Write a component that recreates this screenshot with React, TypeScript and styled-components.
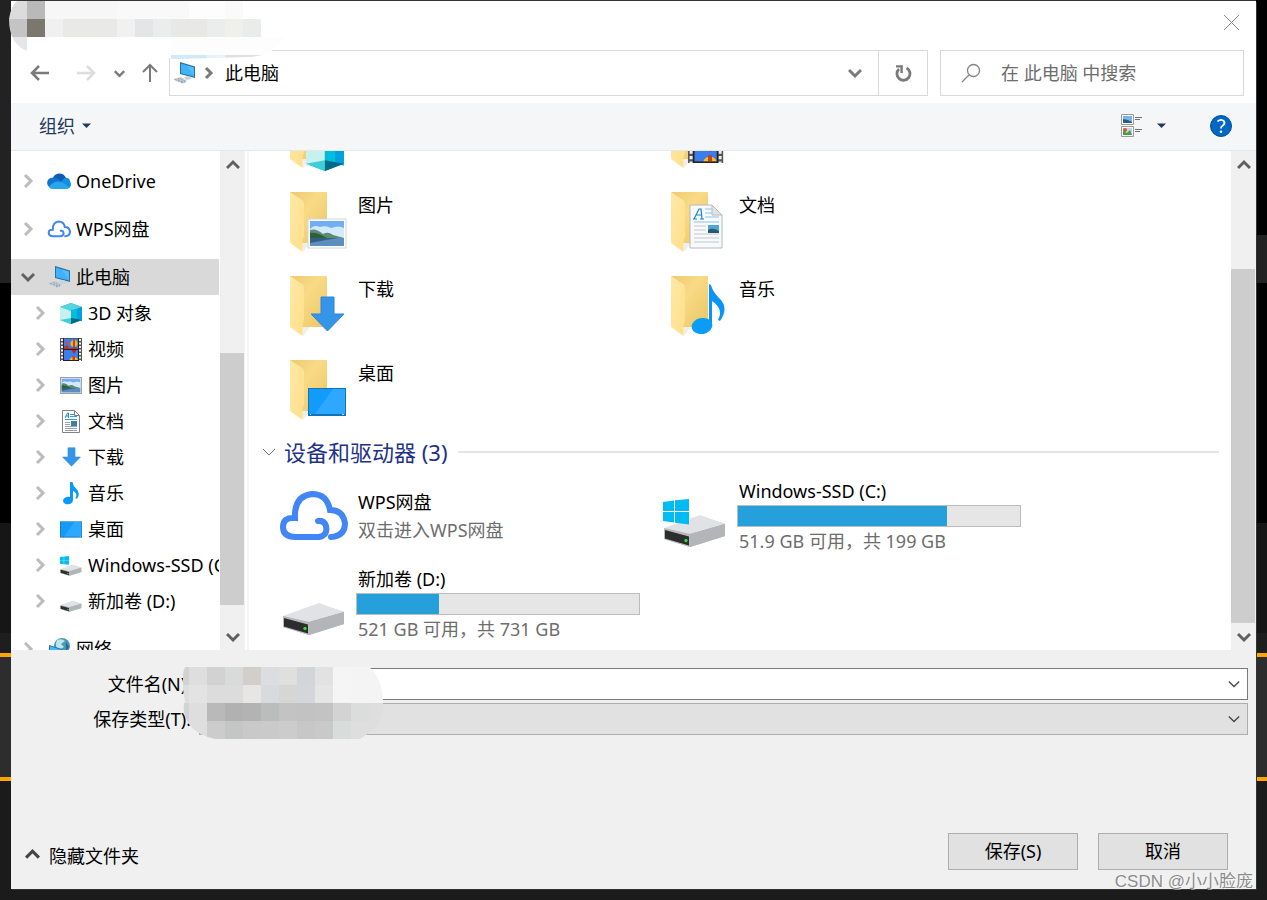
import React from 'react';
import styled, { createGlobalStyle, css } from 'styled-components';

const GlobalStyle = createGlobalStyle`
  *, *::before, *::after { box-sizing: border-box; }
  body {
    margin: 0;
    color: #000;
    font: 18px/24px "Noto Sans", "Noto Sans CJK SC", sans-serif;
    background: #000;
  }
  button, input, select { font: inherit; color: inherit; margin: 0; }
  svg { display: block; flex: none; }
`;

/* ---------- Backdrop and window ---------- */

const Desktop = styled.div`
  position: relative;
  min-height: 100vh;
  padding: 1px 11px 11px;
  background:
    linear-gradient(#1b1b1b, #1b1b1b) 0 889px / 100% 11px no-repeat,
    linear-gradient(#222 283px, #000 283px, #000 523px, #161616 523px, #161616 633px, #1e1e1e 633px, #1e1e1e 653px, #ffa500 653px, #ffa500 657px, #2d2d2d 657px, #2d2d2d 777px, #ffa500 777px, #ffa500 781px, #1b1b1b 781px) 0 0 / 50% 100% no-repeat,
    linear-gradient(#000 235px, #222 235px, #222 283px, #000 283px, #000 523px, #161616 523px, #161616 633px, #1e1e1e 633px, #1e1e1e 653px, #ffa500 653px, #ffa500 657px, #2d2d2d 657px, #2d2d2d 777px, #ffa500 777px, #ffa500 781px, #1b1b1b 781px) 100% 0 / 50% 100% no-repeat;
`;

const Dialog = styled.form`
  display: flex;
  flex-direction: column;
  height: calc(100vh - 12px);
  min-height: 620px;
  background: #fff;
  box-shadow: 1px 1px 0 #333, 0 -1px 0 #333;
`;

const TitleBar = styled.header`
  display: flex;
  justify-content: flex-end;
  align-items: center;
  height: 43px;
  padding-right: 16px;
`;

const PlainButton = styled.button`
  display: flex;
  align-items: center;
  padding: 0;
  border: 0;
  background: none;
`;

/* ---------- Address row ---------- */

const NavRow = styled.nav`
  display: flex;
  align-items: stretch;
  height: 46px;
  margin: 6px 12px 7px 19px;
`;

const NavButton = styled(PlainButton)<{ $gap: number }>`
  margin-right: ${(p) => p.$gap}px;
`;

const AddressBar = styled.div`
  display: flex;
  align-items: stretch;
  flex: 1;
  min-width: 0;
  margin-right: 12px;
  border: 1px solid #d9d9d9;
`;

const Crumbs = styled.div`
  display: flex;
  align-items: center;
  flex: 1;
  gap: 2px;
  padding-left: 2px;
`;

const Crumb = styled.span`
  margin-left: 9px;
`;

const AddressButton = styled(PlainButton)<{ $divided?: boolean }>`
  justify-content: center;
  width: ${(p) => (p.$divided ? 49 : 47)}px;
  ${(p) => p.$divided && css`border-left: 1px solid #d9d9d9;`}
`;

const SearchBox = styled.label`
  display: flex;
  align-items: center;
  gap: 20px;
  flex: 0 1 304px;
  min-width: 0;
  padding-left: 20px;
  border: 1px solid #d9d9d9;
`;

const SearchInput = styled.input`
  flex: 1;
  min-width: 0;
  padding: 0;
  border: 0;
  outline: 0;
  background: none;
  &::placeholder { color: #6d6d6d; opacity: 1; }
`;

/* ---------- Command bar ---------- */

const CommandBar = styled.div`
  display: flex;
  align-items: center;
  flex: none;
  height: 48px;
  padding: 0 24px 2px 28px;
  color: #1e395b;
  background: #f5f6f7;
  border-bottom: 1px solid #e5e7e9;
`;

const CommandButton = styled(PlainButton)<{ $gap?: number; $push?: boolean }>`
  gap: ${(p) => p.$gap ?? 0}px;
  color: #1e395b;
  ${(p) => p.$push && css`margin: 0 43px 0 auto;`}
`;

/* ---------- Panes ---------- */

const Panes = styled.div`
  display: flex;
  flex: 1;
  min-height: 0;
`;

const Tree = styled.ul`
  flex: 0 0 209px;
  margin: 0;
  padding: 12px 1px 0 0;
  overflow: hidden;
  list-style: none;
`;

const TreeRow = styled.li<{ $level: number; $selected?: boolean; $spaced?: boolean }>`
  display: flex;
  align-items: center;
  height: 36px;
  margin-bottom: ${(p) => (p.$spaced ? 12 : 0)}px;
  padding-left: ${(p) => 10 + p.$level * 12}px;
  white-space: nowrap;
  background: ${(p) => (p.$selected ? '#d9d9d9' : 'transparent')};
`;

const TreeIcon = styled.span`
  display: flex;
  justify-content: center;
  flex: none;
  width: 24px;
  margin: 0 5px 0 12px;
`;

const TreeName = styled.span`
  min-width: 0;
  overflow: hidden;
`;

const ScrollTrack = styled.div`
  display: flex;
  flex-direction: column;
  flex: none;
  width: 25px;
  background: #f0f0f0;
`;

const ScrollButton = styled(PlainButton)<{ $height: number }>`
  justify-content: center;
  flex: none;
  width: 25px;
  height: ${(p) => p.$height}px;
`;

const ScrollSpace = styled.div<{ $grow: number; $thumb?: boolean }>`
  flex: ${(p) => p.$grow} 1 0;
  width: 24px;
  background: ${(p) => (p.$thumb ? '#cdcdcd' : 'transparent')};
`;

const Divider = styled.div`
  flex: none;
  width: 4px;
  border-right: 2px solid #f5f5f5;
`;

const Files = styled.main`
  display: flex;
  flex-direction: column;
  justify-content: flex-end;
  flex: 1;
  min-width: 0;
  padding: 0 12px 2px 13px;
  overflow: hidden;
`;

const TileGrid = styled.div<{ $row: number }>`
  display: grid;
  flex: none;
  grid-template-columns: repeat(2, 381px);
  grid-auto-rows: ${(p) => p.$row}px;
  margin-left: 16px;
`;

const FolderTile = styled.div`
  display: flex;
  align-items: flex-start;
`;

const FolderName = styled.span`
  margin: 5px 0 0 10px;
`;

const GroupHeader = styled.h2`
  display: flex;
  align-items: center;
  flex: none;
  gap: 8px;
  height: 24px;
  margin: 0 0 8px;
  font-size: 22px;
  font-weight: 400;
  line-height: 24px;
  color: #1e3287;
  &::after { content: ""; flex: 1; height: 2px; margin-left: 2px; background: #e5e5e5; }
`;

const DriveTile = styled.div`
  display: flex;
  align-items: center;
  gap: 8px;
`;

const DriveInfo = styled.div`
  width: 284px;
`;

const DriveLine = styled.div<{ $muted?: boolean }>`
  padding-left: 2px;
  line-height: 28px;
  color: ${(p) => (p.$muted ? '#6d6d6d' : '#000')};
`;

const Capacity = styled.div`
  height: 22px;
  border: 1px solid #bcbcbc;
  background: #e6e6e6;
`;

const Used = styled.div`
  height: 100%;
  background: #26a0da;
`;

/* ---------- Bottom form ---------- */

const Footer = styled.footer`
  display: flex;
  flex-direction: column;
  flex: none;
  height: 239px;
  padding: 18px 8px 19px 0;
  background: #f0f0f0;
`;

const FieldRow = styled.div`
  display: grid;
  grid-template-columns: 180px 1fr;
  column-gap: 8px;
  align-items: center;
  margin-bottom: 3px;
`;

const FieldLabel = styled.label`
  text-align: right;
  white-space: nowrap;
`;

const Combo = styled.div<{ $filled?: boolean }>`
  display: flex;
  align-items: center;
  height: 32px;
  padding-right: 7px;
  border: 1px solid ${(p) => (p.$filled ? '#adadad' : '#7a7a7a')};
  background: ${(p) => (p.$filled ? '#e1e1e1' : '#fff')};
`;

const comboField = css`
  flex: 1;
  min-width: 0;
  height: 28px;
  border: 0;
  outline: 0;
  background: transparent;
`;

const NameInput = styled.input`${comboField}`;
const TypeSelect = styled.select`
  ${comboField}
  appearance: none;
`;

const Actions = styled.div`
  display: flex;
  align-items: center;
  gap: 20px;
  margin-top: auto;
  padding: 0 20px 0 14px;
`;

const HideFolders = styled(PlainButton)`
  gap: 9px;
  margin: 8px auto 0 0;
`;

const ActionButton = styled.button`
  width: 130px;
  height: 37px;
  padding: 0 0 2px;
  border: 1px solid #adadad;
  background: #e1e1e1;
`;

/* ---------- Overlays ---------- */

const Redaction = styled.svg<{ $x: number; $y: number }>`
  position: absolute;
  left: ${(p) => p.$x}px;
  top: ${(p) => p.$y}px;
  pointer-events: none;
`;

const Watermark = styled.span`
  position: absolute;
  right: 14px;
  bottom: 6px;
  font-family: "Liberation Sans", "Noto Sans CJK SC", sans-serif;
  font-size: 17px;
  color: rgba(120, 120, 120, 0.85);
  text-shadow: 1px 1px 0 rgba(255, 255, 255, 0.5);
`;

/* ---------- Glyphs ---------- */

type Dir = 'up' | 'down' | 'right';
const chevronPaths: Record<Dir, string> = {
  up: 'M1 9L7 3L13 9',
  down: 'M1 4L7 10L13 4',
  right: 'M4 1L10 7L4 13',
};

const Chevron = ({ dir, size = 14, color = '#606060', weight = 3 }: { dir: Dir; size?: number; color?: string; weight?: number }) => (
  <svg width={size} height={size} viewBox="0 0 14 14" fill="none" stroke={color} strokeWidth={weight}>
    <path d={chevronPaths[dir]} />
  </svg>
);

const Arrow = ({ angle, color, weight = 2.5 }: { angle: number; color: string; weight?: number }) => (
  <svg width="20" height="20" viewBox="0 0 20 20" fill="none" stroke={color} strokeWidth={weight}>
    <path transform={`rotate(${angle} 10 10)`} d="M19 10H2M9 3L2 10L9 17" />
  </svg>
);

const DropCaret = () => (
  <svg width="10" height="6" viewBox="0 0 10 6"><path d="M0 .5H9L4.500 5Z" fill="#1e395b" /></svg>
);

const Computer = () => (
  <svg width="24" height="24" viewBox="0 0 24 24">
    <path d="M8 1L23 5.500V17L8 13Z" fill="#2b6f9f" />
    <path d="M9 2.500L22 6.400V15.600L9 12.200Z" fill="#3fb2fb" />
    <path d="M15 4.500L22 6.400V15.600Z" fill="#62c3ff" opacity=".6" />
    <path d="M12 16L17 15L20 18L14 19Z" fill="#c9d2d8" />
    <path d="M1 18L9 16L15 20L12 22.500L6 21Z" fill="#c3ccd3" />
    <path d="M3 18.500L11 21M6 17.500L13 20M9 22L13 20.500" stroke="#8798a6" strokeWidth=".8" strokeDasharray="2 1" />
  </svg>
);

const OneDrive = () => (
  <svg width="24" height="24" viewBox="0 0 24 24">
    <path d="M6 9A7 7 0 0 1 18.500 8L20 12H5Z" fill="#0f5cb5" />
    <path d="M5 19A5 5 0 0 1 5.500 8.800Q9 8 11 10L18 14L14 20Z" fill="#1173d2" />
    <path d="M12 15L17.500 9Q22 8 23 12Q26 18 20 20Z" fill="#1490e3" />
    <path d="M2 18Q6 12 12 12.500Q18 14 22 18.500Q20 20 18 20H5Q3 20 2 18Z" fill="#28a8ea" />
  </svg>
);

const WpsCloud = ({ width, height }: { width: number; height: number }) => (
  <svg width={width} height={height} viewBox="-1 0 70 52" fill="none" stroke="#4285f4" strokeWidth="6" strokeLinecap="round">
    <path d="M52 47Q66 46 66 33Q64 20 51 20Q48 4 33 4Q15 6 16 28Q4 27 4 37Q4 47 17 47H40Q49 45 47 36Q45 30 39 31" />
  </svg>
);

const CubeShapes = () => (
  <>
    <path d="M0 5L11 1L22 5V18L11 22L0 18Z" fill="#00a4d8" />
    <path d="M0 5L11 1L22 5L11 9Z" fill="#55d4df" />
    <path d="M0 5L11 9V17L0 19Z" fill="#c7f1ee" />
    <path d="M11 9L22 5V19L11 16Z" fill="#009fe0" />
    <path d="M11 8L17 7V17H11Z" fill="#00bddb" />
    <path d="M0 18L11 16V22Z" fill="#3dcfd6" />
    <path d="M22 18L11 16V22Z" fill="#006b87" />
  </>
);

const FilmShapes = () => (
  <>
    <path d="M0 0H22V23H0Z" fill="#555" />
    <path d="M4 1H18V11H4ZM4 12H18V22H4Z" fill="#3b7ded" />
    <path d="M2 1V23M20 1V23" stroke="#eee" strokeWidth="2" strokeDasharray="2 1.500" />
    <path d="M4 9L7 7L10 10L15 9L18 11H4Z" fill="#bd3526" />
    <circle cx="14" cy="5.500" r="3.500" fill="#f2b51d" />
    <path d="M13 2H15V9H13Z" fill="#b9472a" />
    <circle cx="7" cy="5" r="1.500" fill="#d94a3a" />
    <path d="M9.500 22A4.500 4.500 0 0 1 18 22Z" fill="#f5c01c" />
    <path d="M12.500 22V18H15V22Z" fill="#d33a20" />
    <path d="M11.500 12H16.500L14 16Z" fill="#ab2b22" />
    <path d="M3.500 0V23M18.500 0V23M4 11.500H18M4 22.500H18" stroke="#222" />
  </>
);

const PictureShapes = () => (
  <>
    <rect width="38" height="29" fill="#fff" stroke="#d3d6d9" strokeWidth="1" />
    <rect x="2" y="2" width="34" height="25" fill="#74adf4" />
    <path d="M2 10Q6 5 12 8Q18 6 23 9Q31 6 36 9V20H2Z" fill="#d3eafd" />
    <path d="M2 11Q8 9 15 15Q20 12 25 16L36 19H2Z" fill="#5b8b70" />
    <path d="M2 14Q9 13 19 19H2Z" fill="#2e5f3c" />
    <rect x="2" y="19" width="34" height="8" fill="#5c8fbd" />
    <path d="M2 19H30L18 21L2 24Z" fill="#34607f" />
  </>
);

const DocumentShapes = () => (
  <>
    <path d="M0 0H22L32 10V43H0Z" fill="#f7f9fa" stroke="#b4babf" />
    <path d="M22 0V10H32Z" fill="#dfe4e7" stroke="#b4babf" />
    <path d="M4 14L9 4H11L12 14M6 10H12M3 14H7M10 14H14" fill="none" stroke="#1d87c9" strokeWidth="1.200" />
    <path d="M15 4H22M15 8H22M15 12H29M4 17H29" stroke="#8bc5e4" strokeWidth="1.200" />
    <path d="M4 21H16M4 25H16M4 29H29M4 33H29M4 37H29" stroke="#c5cacd" strokeWidth="1.200" />
    <rect x="18" y="20" width="11" height="8" fill="#4aa6dd" />
    <path d="M18 25Q23 22 29 26V28H18Z" fill="#285b68" />
  </>
);

const SmallDocument = () => (
  <svg width="18" height="23" viewBox="0 0 18 23" fill="none">
    <path d="M.5.500H12.500L17.500 5.500V22.500H.5Z" fill="#fff" stroke="#7d8388" />
    <path d="M12.500.500V5.500H17.500" stroke="#7d8388" />
    <path d="M3 8L5.500 3H6.500V8M4 6H7" stroke="#1d87c9" />
    <path d="M8 4.500H12M8 6.500H15M3 9.500H15" stroke="#3a9bd6" />
    <path d="M3 12.500H8M3 14.500H8M3 16.500H15M3 18.500H15M3 20.500H15" stroke="#9aa0a5" />
    <rect x="9" y="11" width="6" height="5" fill="#3f7fa8" />
  </svg>
);

const NoteShapes = () => (
  <>
    <path d="M17 0Q19 0 20 4Q22 9 28 15Q37 24 28 37L26 36Q32 25 20 17V42H17Z" fill="#0796f5" />
    <ellipse cx="10" cy="42" rx="10.500" ry="8" transform="rotate(-10 10 42)" fill="#0a9df8" />
  </>
);

const SmallNote = () => (
  <svg width="18" height="23" viewBox="0 0 18 23" fill="#0a9af6">
    <path d="M8 0H10.500Q11 4 14 6.500Q19 11 15 17L13.500 16Q16 11 11 9V18H8Z" />
    <ellipse cx="6" cy="18.500" rx="5" ry="3.800" transform="rotate(-12 6 18.500)" />
  </svg>
);

const DesktopShapes = () => (
  <>
    <rect width="38" height="28" fill="#0f73b8" />
    <rect x="1" y="1" width="36" height="25" fill="#139bfb" />
    <path d="M25 1H37V26H7Z" fill="#2ea8ff" />
    <path d="M2 26.500H37" stroke="#a7dcff" strokeWidth="1" strokeDasharray="1 31 2 1" />
  </>
);

const DownShapes = () => (
  <path d="M10 0H23V17H33L16.500 34L0 17H10Z" fill="#3595e9" stroke="#2f86d6" strokeWidth="1" />
);

const DriveShapes = () => (
  <>
    <path d="M1 14L37 1L62 9V21L27 32L1 24Z" fill="#aeb0b2" />
    <path d="M1 13L37 0L62 9L27 19Z" fill="#e1e2e5" />
    <path d="M27 19L62 9V21L27 32Z" fill="#b3b5b8" />
    <path d="M1 13L27 20V32L1 24Z" fill="#b8babb" />
    <path d="M2 15L26 21.500V30.500L2 23.500Z" fill="#2b2d2e" />
    <circle cx="23" cy="25.500" r="1.700" fill="#27e327" />
  </>
);

const WindowsShapes = () => (
  <path d="M0 3L11 1.500V12H0ZM12 1.300L26 0V12H12ZM0 13H11V23.500L0 22ZM12 13H26V25.500L12 23.700Z" fill="#00bcf2" />
);

const Small = ({ w, h, box, children }: { w: number; h: number; box: string; children: React.ReactNode }) => (
  <svg width={w} height={h} viewBox={box}>{children}</svg>
);

const Globe = () => (
  <svg width="24" height="24" viewBox="0 0 24 24">
    <circle cx="15" cy="9" r="8" fill="#4b97b8" />
    <path d="M10 3Q15 1 18 4L14 7L17 10L12 13Q7 10 10 3Z" fill="#bfe4ea" />
    <path d="M19 5L22 10L19 14Z" fill="#236a8d" />
    <path d="M2 8L15 12V22L2 19Z" fill="#2177b2" />
    <path d="M3 9.300L14 12.800V20.500L3 18Z" fill="#4ab6f5" />
  </svg>
);

const DriveIcon = ({ system }: { system?: boolean }) => (
  <svg width="70" height="88" viewBox="0 0 70 88">
    <g transform="translate(4 43)"><DriveShapes /></g>
    {system && <g transform="translate(4 27)"><WindowsShapes /></g>}
  </svg>
);

const FolderIcon = ({ children }: { children: React.ReactNode }) => (
  <svg width="70" height="70" viewBox="0 0 70 70">
    <defs>
      <linearGradient id="back" x1="0" y1="0" x2="1" y2="1">
        <stop offset="0" stopColor="#edca72" />
        <stop offset=".4" stopColor="#f9da86" />
        <stop offset="1" stopColor="#e9c665" />
      </linearGradient>
      <linearGradient id="flap" x1="0" y1="0" x2="1" y2="1">
        <stop offset="0" stopColor="#ffe9a8" />
        <stop offset="1" stopColor="#ffdf88" />
      </linearGradient>
    </defs>
    <path d="M24 55H32L25 64Z" fill="#eee" />
    <path d="M12 4H48Q49 4 49 5V55H22Z" fill="url(#back)" />
    <path d="M12 4L24 12Q26 13 26 16V49L24.500 52V64L12 55Z" fill="url(#flap)" />
    {children}
  </svg>
);

/* ---------- Data ---------- */

type Node = { name: string; level: number; icon: React.ReactNode; spaced?: boolean; open?: boolean };

const tree: Node[] = [
  { name: 'OneDrive', level: 0, icon: <OneDrive />, spaced: true },
  { name: 'WPS网盘', level: 0, icon: <WpsCloud width={24} height={18} />, spaced: true },
  { name: '此电脑', level: 0, icon: <Computer />, open: true },
  { name: '3D 对象', level: 1, icon: <Small w={22} h={23} box="0 0 22 23"><CubeShapes /></Small> },
  { name: '视频', level: 1, icon: <Small w={22} h={23} box="0 0 22 23"><FilmShapes /></Small> },
  { name: '图片', level: 1, icon: <Small w={22} h={17} box="-1 -1 40 31"><PictureShapes /><rect width="38" height="29" fill="none" stroke="#9aa0a5" strokeWidth="2" /></Small> },
  { name: '文档', level: 1, icon: <SmallDocument /> },
  { name: '下载', level: 1, icon: <Small w={19} h={20} box="-1 -1 35 36"><DownShapes /></Small> },
  { name: '音乐', level: 1, icon: <SmallNote /> },
  { name: '桌面', level: 1, icon: <Small w={22} h={17} box="0 0 38 28"><DesktopShapes /></Small> },
  { name: 'Windows-SSD (C:)', level: 1, icon: <Small w={22} h={22} box="0 -20 64 64"><g transform="translate(0 11)"><DriveShapes /></g><g transform="translate(0 -14)"><WindowsShapes /></g></Small> },
  { name: '新加卷 (D:)', level: 1, icon: <Small w={22} h={22} box="0 -20 64 64"><g transform="translate(0 11)"><DriveShapes /></g></Small>, spaced: true },
  { name: '网络', level: 0, icon: <Globe /> },
];

const folders = [
  { id: 'objects', icon: <g transform="translate(28 28) scale(1.720 1.770)"><CubeShapes /></g> },
  { id: 'videos', icon: <g transform="translate(29 23) scale(1.600 1.570)"><FilmShapes /></g> },
  { id: 'pictures', name: '图片', icon: <g transform="translate(30 31)"><PictureShapes /></g> },
  { id: 'documents', name: '文档', icon: <g transform="translate(31 17)"><DocumentShapes /></g> },
  { id: 'downloads', name: '下载', icon: <g transform="translate(33 25)"><DownShapes /></g> },
  { id: 'music', name: '音乐', icon: <g transform="translate(33 12)"><NoteShapes /></g> },
  { id: 'desktop', name: '桌面', icon: <g transform="translate(30 32)"><DesktopShapes /></g> },
];

const drives = [
  { name: 'WPS网盘', note: '双击进入WPS网盘', icon: <WpsCloud width={70} height={52} /> },
  { name: 'Windows-SSD (C:)', note: '51.9 GB 可用，共 199 GB', used: 74, icon: <DriveIcon system /> },
  { name: '新加卷 (D:)', note: '521 GB 可用，共 731 GB', used: 29, icon: <DriveIcon /> },
];

const titleBlocks: [number, number, number, number, string][] = [
  [0, 1, 18, 18, '#dcdcdc'], [18, 1, 18, 18, '#b9b9b9'], [36, 1, 72, 18, '#f7f7f7'], [108, 1, 72, 18, '#f9f9f9'],
  [180, 1, 36, 18, '#fdfdfd'], [216, 1, 18, 18, '#fafafa'], [0, 19, 18, 18, '#c4c4c4'], [18, 19, 18, 18, '#7b766e'],
  [36, 19, 18, 18, '#f0f0f0'], [54, 19, 54, 18, '#e9e9e8'], [108, 19, 18, 18, '#f1f1f1'], [126, 19, 18, 18, '#e4e5e6'],
  [144, 19, 18, 18, '#ebecec'], [162, 19, 36, 18, '#e8e8e7'], [198, 19, 18, 18, '#eaedec'], [216, 19, 18, 18, '#efefec'],
  [234, 19, 18, 18, '#eaecec'], [0, 37, 18, 18, '#e6e6e6'], [18, 37, 144, 21, '#fff'], [162, 37, 120, 18, '#fdfdfd'],
  [162, 55, 36, 4, '#d1eaf8'], [198, 55, 18, 4, '#e6f3fb'], [216, 55, 40, 4, '#e0e0e0'],
];

const fieldColors = [
  ['#d2d2d3', '#dedede', '#d2d2d2', '#d8dbda', '#d2cfca', '#dcdde0', '#dfdfdd', '#d4d5d9', '#e2e2e2', '#f5f5f5', '#f4f4f4', '#f4f4f4'],
  ['#dedede', '#e3e3e3', '#dcdcdc', '#dcdcdc', '#e8e6e4', '#d9dade', '#d6d6d5', '#d5d6db', '#e5e5e6', '#f5f5f5', '#f4f4f4', '#f4f4f4'],
  ['#d3d3d3', '#dedede', '#b9b9b9', '#b1b1b1', '#b4b3b4', '#bbbcbc', '#c3c3c3', '#c2c2c2', '#c3c3c3', '#d3d3d3', '#dbdddc', '#dedede'],
  ['#dedede', '#dedede', '#cccccc', '#c3c6c5', '#c9c9c9', '#cacaca', '#cbcccb', '#c7c7c7', '#c9c9c9', '#d8dcda', '#dedede', '#dedede'],
];

const Scrollbar = ({ parts }: { parts: [number, number, number] }) => (
  <ScrollTrack>
    <ScrollButton type="button" aria-label="Scroll up" $height={30}><Chevron dir="up" /></ScrollButton>
    <ScrollSpace $grow={parts[0]} />
    <ScrollSpace $grow={parts[1]} $thumb />
    <ScrollSpace $grow={parts[2]} />
    <ScrollButton type="button" aria-label="Scroll down" $height={27}><Chevron dir="down" /></ScrollButton>
  </ScrollTrack>
);

export default function App() {
  return (
    <Desktop lang="zh-CN">
      <GlobalStyle />
      <Dialog onSubmit={(e) => e.preventDefault()}>
        <TitleBar>
          <PlainButton type="button" aria-label="Close">
            <svg width="17" height="17" viewBox="0 0 17 17" stroke="#8a8a8a"><path d="M1 1L16 16M16 1L1 16" /></svg>
          </PlainButton>
        </TitleBar>

        <NavRow>
          <NavButton type="button" aria-label="Back" $gap={26}><Arrow angle={0} color="#7a7a7a" /></NavButton>
          <NavButton type="button" aria-label="Forward" $gap={18}><Arrow angle={180} color="#dcdcdc" /></NavButton>
          <NavButton type="button" aria-label="Recent" $gap={15}><Chevron dir="down" size={11} color="#7a7a7a" /></NavButton>
          <NavButton type="button" aria-label="Up" $gap={9}><Arrow angle={90} color="#7a7a7a" weight={2} /></NavButton>
          <AddressBar>
            <Crumbs>
              <Computer />
              <svg width="16" height="16" viewBox="0 0 16 16" fill="none" stroke="#7a7a7a" strokeWidth="3"><path d="M8 3L13 8L8 13" /></svg>
              <Crumb>此电脑</Crumb>
            </Crumbs>
            <AddressButton type="button" aria-label="Previous locations"><Chevron dir="down" color="#7a7a7a" /></AddressButton>
            <AddressButton type="button" aria-label="Refresh" $divided>
              <svg width="18" height="18" viewBox="0 0 18 18" fill="none" stroke="#7a7a7a" strokeWidth="2.800">
                <path d="M12.500 4A6.500 6.500 0 1 1 5 5" />
                <path d="M2 2.400H7.600V9" strokeWidth="2.400" />
              </svg>
            </AddressButton>
          </AddressBar>
          <SearchBox>
            <svg width="20" height="20" viewBox="0 0 20 20" fill="none" stroke="#858585" strokeWidth="1.300">
              <circle cx="12.500" cy="7.500" r="6" /><path d="M8 12L1 19" />
            </svg>
            <SearchInput type="text" aria-label="搜索" placeholder="在 此电脑 中搜索" />
          </SearchBox>
        </NavRow>

        <CommandBar>
          <CommandButton type="button" $gap={7}>组织<DropCaret /></CommandButton>
          <CommandButton type="button" aria-label="View" $gap={14} $push>
            <svg width="22" height="24" viewBox="0 0 22 24">
              <path d="M.5.500H12.500V10.500H.5ZM.5 12.500H12.500V22.500H.5Z" fill="#fff" stroke="#999" />
              <rect x="2" y="2" width="9" height="7" fill="#78b4ef" />
              <path d="M2 5L7 6L11 8V9H2Z" fill="#285f78" />
              <rect x="2" y="14" width="9" height="7" fill="#b8d8f0" />
              <path d="M2 21V17L6 19L9 16L11 21Z" fill="#4b9c3c" /><circle cx="4" cy="16" r="2" fill="#d8562a" />
              <path d="M14 3.500H21M14 5.500H19M14 15.500H21M14 17.500H19" stroke="#707070" />
            </svg>
            <DropCaret />
          </CommandButton>
          <PlainButton type="button" aria-label="Help">
            <svg width="22" height="22" viewBox="0 0 22 22">
              <circle cx="11" cy="11" r="10.500" fill="#0067c5" stroke="#0a4f92" />
              <path d="M7.500 6.500Q11 3.500 14 6.200Q15.500 9 12.500 10.800Q11 11.800 11 13.500" fill="none" stroke="#fff" strokeWidth="1.800" />
              <circle cx="11" cy="16.700" r="1.300" fill="#fff" />
            </svg>
          </PlainButton>
        </CommandBar>

        <Panes>
          <Tree>
            {tree.map((n) => (
              <TreeRow key={n.name} $level={n.level} $selected={n.open} $spaced={n.spaced}>
                <Chevron dir={n.open ? 'down' : 'right'} color={n.open ? '#606060' : '#bcbcbc'} />
                <TreeIcon>{n.icon}</TreeIcon>
                <TreeName>{n.name}</TreeName>
              </TreeRow>
            ))}
          </Tree>
          <Scrollbar parts={[172, 252, 18]} />
          <Divider />
          <Files>
            <TileGrid $row={84}>
              {folders.map((f) => (
                <FolderTile key={f.id}>
                  <FolderIcon>{f.icon}</FolderIcon>
                  {f.name && <FolderName>{f.name}</FolderName>}
                </FolderTile>
              ))}
            </TileGrid>
            <GroupHeader>
              <Chevron dir="down" color="#707070" weight={1} />
              设备和驱动器 (3)
            </GroupHeader>
            <TileGrid $row={88}>
              {drives.map((d) => (
                <DriveTile key={d.name}>
                  {d.icon}
                  <DriveInfo>
                    <DriveLine>{d.name}</DriveLine>
                    {d.used !== undefined && <Capacity><Used style={{ width: `${d.used}%` }} /></Capacity>}
                    <DriveLine $muted>{d.note}</DriveLine>
                  </DriveInfo>
                </DriveTile>
              ))}
            </TileGrid>
          </Files>
          <Scrollbar parts={[88, 354, 0]} />
        </Panes>

        <Footer>
          <FieldRow>
            <FieldLabel htmlFor="file-name">文件名(N):</FieldLabel>
            <Combo>
              <NameInput id="file-name" type="text" />
              <Chevron dir="down" size={12} color="#444" weight={1.5} />
            </Combo>
          </FieldRow>
          <FieldRow>
            <FieldLabel htmlFor="file-type">保存类型(T):</FieldLabel>
            <Combo $filled>
              <TypeSelect id="file-type" />
              <Chevron dir="down" size={12} color="#444" weight={1.5} />
            </Combo>
          </FieldRow>
          <Actions>
            <HideFolders type="button"><Chevron dir="up" size={15} color="#444" />隐藏文件夹</HideFolders>
            <ActionButton type="submit">保存(S)</ActionButton>
            <ActionButton type="button">取消</ActionButton>
          </Actions>
        </Footer>
      </Dialog>

      <Redaction $x={9} $y={0} width="282" height="59" viewBox="0 0 282 59" aria-hidden="true">
        <clipPath id="title-smudge"><path d="M8 1H262V37H274Q268 55 240 57L170 59L60 56L18 51Q0 44 0 19Q2 6 8 1Z" /></clipPath>
        <g clipPath="url(#title-smudge)" shapeRendering="crispEdges">
          {titleBlocks.map(([x, y, w, h, c]) => <rect key={`${x}-${y}`} x={x} y={y} width={w} height={h} fill={c} />)}
        </g>
      </Redaction>

      <Redaction $x={183} $y={667} width="201" height="72" viewBox="0 0 201 72" aria-hidden="true">
        <clipPath id="field-smudge"><path d="M2 0H186Q199 10 200 34Q201 56 186 66L177 72H32Q4 66 1 44Q0 38 2 34Q-3 12 2 0Z" /></clipPath>
        <g clipPath="url(#field-smudge)" shapeRendering="crispEdges">
          {fieldColors.map((row, r) => row.map((c, i) => (
            <rect key={`${r}-${i}`} x={i * 18 - 12} y={r * 18} width="18" height="18" fill={c} />
          )))}
        </g>
      </Redaction>

      <Watermark>CSDN @小小脸庞</Watermark>
    </Desktop>
  );
}
